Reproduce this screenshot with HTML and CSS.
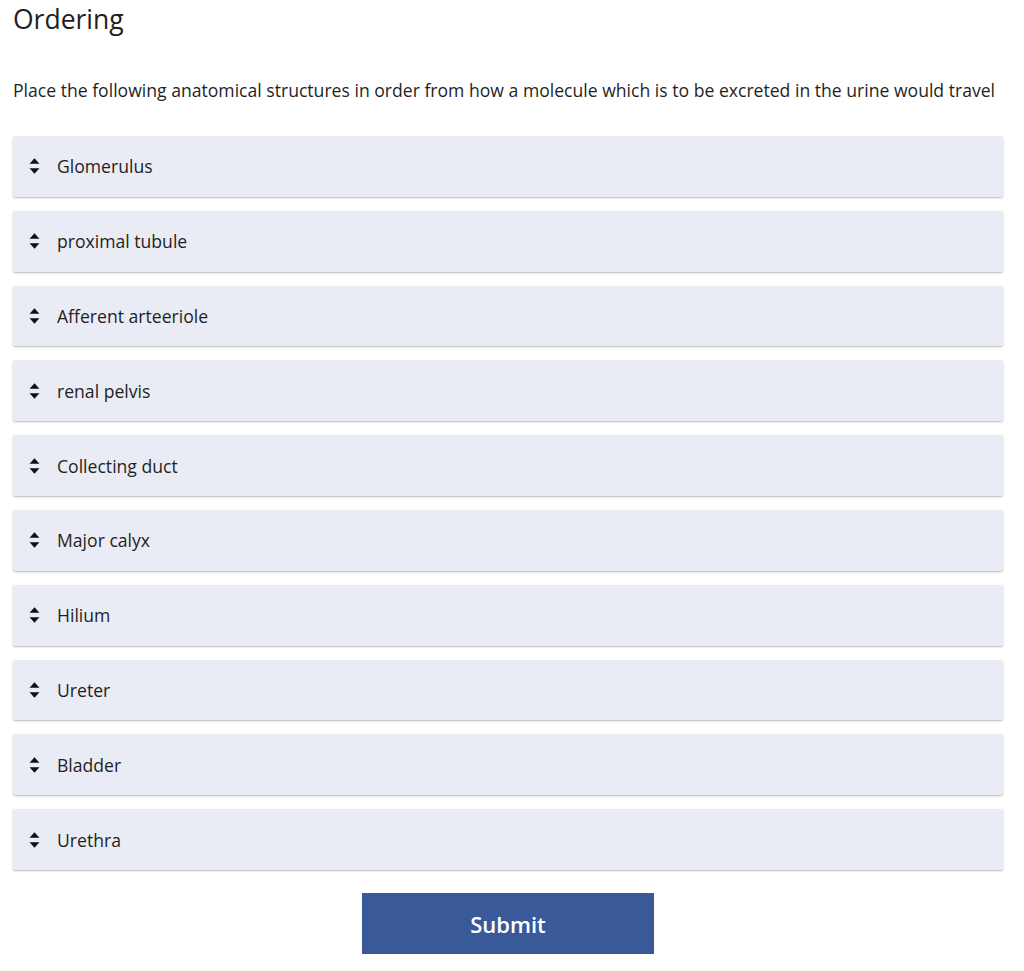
FILE: index.html
```html
<!DOCTYPE html>
<html>
<head>
<meta charset="utf-8">
<link rel="stylesheet" href="styles.css">
</head>
<body>
<div class="page">
  <h1 class="title">Ordering</h1>
  <p class="prompt">Place the following anatomical structures in order from how a molecule which is to be excreted in the urine would travel</p>
  <ul class="list">
    <li class="item"><svg class="sort" viewBox="0 0 10 16"><path d="M5 1 L9.5 6 H0.5 Z M5 15 L9.5 10 H0.5 Z"/></svg><span>Glomerulus</span></li>
    <li class="item"><svg class="sort" viewBox="0 0 10 16"><path d="M5 1 L9.5 6 H0.5 Z M5 15 L9.5 10 H0.5 Z"/></svg><span>proximal tubule</span></li>
    <li class="item"><svg class="sort" viewBox="0 0 10 16"><path d="M5 1 L9.5 6 H0.5 Z M5 15 L9.5 10 H0.5 Z"/></svg><span>Afferent arteeriole</span></li>
    <li class="item"><svg class="sort" viewBox="0 0 10 16"><path d="M5 1 L9.5 6 H0.5 Z M5 15 L9.5 10 H0.5 Z"/></svg><span>renal pelvis</span></li>
    <li class="item"><svg class="sort" viewBox="0 0 10 16"><path d="M5 1 L9.5 6 H0.5 Z M5 15 L9.5 10 H0.5 Z"/></svg><span>Collecting duct</span></li>
    <li class="item"><svg class="sort" viewBox="0 0 10 16"><path d="M5 1 L9.5 6 H0.5 Z M5 15 L9.5 10 H0.5 Z"/></svg><span>Major calyx</span></li>
    <li class="item"><svg class="sort" viewBox="0 0 10 16"><path d="M5 1 L9.5 6 H0.5 Z M5 15 L9.5 10 H0.5 Z"/></svg><span>Hilium</span></li>
    <li class="item"><svg class="sort" viewBox="0 0 10 16"><path d="M5 1 L9.5 6 H0.5 Z M5 15 L9.5 10 H0.5 Z"/></svg><span>Ureter</span></li>
    <li class="item"><svg class="sort" viewBox="0 0 10 16"><path d="M5 1 L9.5 6 H0.5 Z M5 15 L9.5 10 H0.5 Z"/></svg><span>Bladder</span></li>
    <li class="item"><svg class="sort" viewBox="0 0 10 16"><path d="M5 1 L9.5 6 H0.5 Z M5 15 L9.5 10 H0.5 Z"/></svg><span>Urethra</span></li>
  </ul>
  <div class="actions"><button class="submit">Submit</button></div>
</div>
</body>
</html>
```
FILE: styles.css
```css
html, body {
  margin: 0;
  padding: 0;
  background: #ffffff;
}
body {
  font-family: "Open Sans", "Noto Sans", sans-serif;
  color: #1f1f1f;
}
.page {
  padding: 0 21px 0 13px;
}
.title {
  font-size: 26.5px;
  font-weight: 400;
  line-height: 36px;
  margin: 1px 0 0 0;
}
.prompt {
  font-size: 17.6px;
  line-height: 24px;
  margin: 41px 0 34px 0;
}
.list {
  list-style: none;
  margin: 0;
  padding: 0;
  display: flex;
  flex-direction: column;
  gap: 14px;
}
.item {
  display: flex;
  align-items: center;
  height: 60.8px;
  background: #e9ecf4;
  border-radius: 2px;
  box-shadow: 0 1px 2px rgba(0,0,0,0.28);
  padding-left: 16px;
  font-size: 17.6px;
}
.sort {
  width: 11px;
  height: 18px;
  fill: #111111;
  margin-right: 17px;
  flex: none;
}
.actions {
  display: flex;
  justify-content: center;
  margin-top: 23.5px;
}
.submit {
  width: 292px;
  height: 61px;
  background: #3a5998;
  border: none;
  border-radius: 0;
  color: #ffffff;
  font-family: "Open Sans", "Noto Sans", sans-serif;
  font-size: 22px;
  font-weight: 600;
}
```
